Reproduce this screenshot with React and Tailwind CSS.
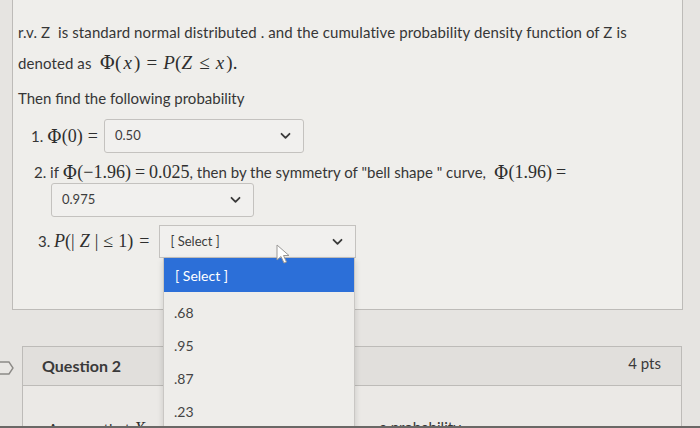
import React from "react";

const M = ({ children, className = "" }) => (
  <span className={`text-[18px] text-[#2e2e2e] ${className}`} style={{ fontFamily: '"DejaVu Serif", "Liberation Serif", serif' }}>
    {children}
  </span>
);
const S = ({ children, className = "" }) => (
  <span className={`text-[18px] text-[#2e2e2e] ${className}`} style={{ fontFamily: '"Liberation Serif", serif' }}>
    {children}
  </span>
);
const Op = ({ children, w = "mx-[4px]" }) => <span className={w}>{children}</span>;

const Chevron = () => (
  <svg width="11" height="8" viewBox="0 0 11 8" fill="none">
    <path d="M1.5 1.8 L5.5 5.8 L9.5 1.8" stroke="#3a3a3a" strokeWidth="1.8" strokeLinecap="round" strokeLinejoin="round" />
  </svg>
);

const Select = ({ value, className }) => (
  <div className={`flex items-center justify-between border border-[#c4c2bf] bg-[#f1f0ee] rounded-[3px] pl-[10px] pr-[12px] text-[13px] text-[#3c3c3c] ${className}`}>
    <span>{value}</span>
    <Chevron />
  </div>
);

export default function App() {
  return (
    <div
      className="relative w-[700px] h-[428px] overflow-hidden bg-[#e6e4e1] flex flex-col border-b-2 border-[#6a6866]"
      style={{ fontFamily: 'Lato, "Open Sans", sans-serif' }}
    >
      {/* Card 1 */}
      <div className="ml-[12px] w-[671px] h-[310px] shrink-0 border-x border-b border-[#bdbbb8] bg-[#efeeeb] pl-[5px] pt-[17px] text-[#363636]">
        <p className="text-[15px] leading-[30px] tracking-[0.1px]">
          r.v. Z &nbsp;is standard normal distributed . and the cumulative probability density function of Z is
          <br />
          denoted as&nbsp; <M className="text-[19px]">Φ</M>
          <S className="text-[19px]">
            (<i className="mx-[2px]">x</i>)<Op w="mx-[6px]">=</Op><i>P</i>(<i className="mr-[1px]">Z</i><Op w="mx-[6px]">≤</Op><i className="mr-[2px]">x</i>).
          </S>
        </p>
        <p className="mt-[5px] text-[15px] leading-[30px]">Then find the following probability</p>

        <div className="mt-[6px] pl-[13px] flex items-center h-[34px]">
          <span className="text-[15px]">1.&nbsp;</span>
          <M>Φ</M>
          <S>(0)<span className="ml-[5px]">=</span></S>
          <Select value="0.50" className="ml-[6px] w-[200px] h-[34px]" />
        </div>

        <div className="mt-[8px] pl-[16px] flex items-center h-[22px] text-[15px]">
          <span>2. if&nbsp;</span>
          <M>Φ</M>
          <S>(−1.96)<Op>=</Op>0.025</S>
          <span>, then by the symmetry of "bell shape " curve,&nbsp;&nbsp;</span>
          <M>Φ</M>
          <S>(1.96)<Op>=</Op></S>
        </div>

        <div className="pl-[33px]">
          <Select value="0.975" className="w-[203px] h-[34px]" />
        </div>

        <div className="mt-[8px] pl-[20px] flex items-center h-[33px]">
          <span className="text-[15px]">3.&nbsp;</span>
          <S>
            <i>P</i>(|<span className="mx-[5px]"><i>Z</i></span>|<Op w="mx-[5px]">≤</Op>1)<Op w="mx-[6px]">=</Op>
          </S>
          <Select value="[ Select ]" className="ml-[4px] w-[197px] h-[33px] rounded-none border-[#bdbbb8]" />
        </div>
      </div>

      {/* Card 2 */}
      <div className="mt-[36px] ml-[22px] w-[660px] flex flex-col grow">
        <div className="h-[40px] shrink-0 border border-[#bdbbb8] bg-[#e1dfdc] flex items-center justify-between pl-[19px] pr-[20px]">
          <span className="text-[16px] font-bold text-[#3a3a3a]">Question 2</span>
          <span className="text-[15px] text-[#3a3a3a] -mt-[6px]">4 pts</span>
        </div>
        <div className="grow border-x border-[#bdbbb8] bg-[#ebe9e6] pl-[25px] pt-[30px] text-[15px] text-[#363636] flex gap-[220px]">
          <span>Assume that <S><i>X</i></S> ...</span>
          <span>a probability</span>
        </div>
      </div>

      {/* flag icon at left edge */}
      <svg className="absolute left-0 top-[360px]" width="16" height="16" viewBox="0 0 16 16" fill="none">
        <path d="M-4 2 H9 L13 8 L9 14 H-4" stroke="#8c8a87" strokeWidth="1.4" fill="#e9e7e4" />
      </svg>

      {/* open dropdown list */}
      <div className="absolute left-[163px] top-[258px] w-[192px] h-[175px] bg-[#eeedea] border-x border-[#c9c7c4] shadow-[0_2px_6px_rgba(0,0,0,0.15)] text-[14px]">
        <div className="h-[34px] bg-[#2c6fd8] text-white flex items-center pl-[11px]">[ Select ]</div>
        <div className="pt-[4px] text-[#444]">
          <div className="h-[33px] flex items-center pl-[10px]">.68</div>
          <div className="h-[33px] flex items-center pl-[10px]">.95</div>
          <div className="h-[33px] flex items-center pl-[10px]">.87</div>
          <div className="h-[33px] flex items-center pl-[10px]">.23</div>
        </div>
      </div>

      {/* mouse cursor */}
      <svg className="absolute left-[276px] top-[244px]" width="18" height="22" viewBox="0 0 18 22" fill="none">
        <path d="M1 1 L1 16 L5 12.5 L8 19 L10.5 18 L7.5 11.5 L13 11.5 Z" fill="#ffffff" stroke="#9a9896" strokeWidth="1" strokeLinejoin="round" />
      </svg>
    </div>
  );
}
